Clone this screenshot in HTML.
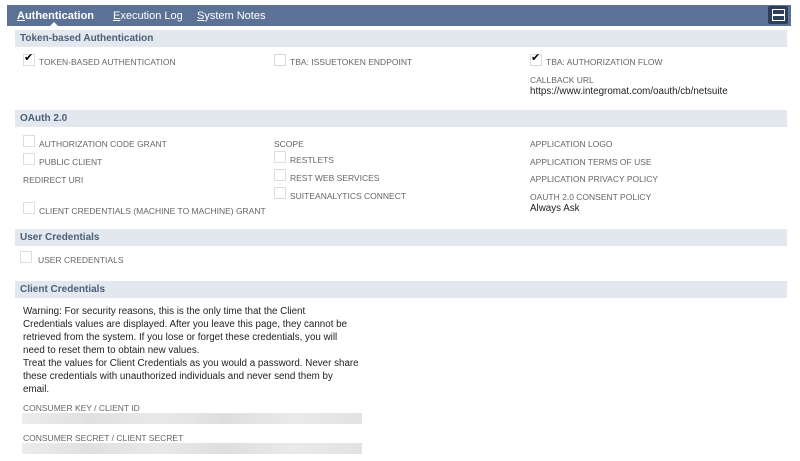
<!DOCTYPE html><html><head><style>
body{margin:0;width:800px;height:461px;background:#fff;font-family:"Liberation Sans",sans-serif;position:relative;overflow:hidden}
.a{position:absolute;white-space:nowrap}
.tabs{position:absolute;left:7px;top:5px;width:784px;height:21px;background:#5b7296}
.tab{position:absolute;top:10px;color:#fff;font-size:11px}
.hd{position:absolute;left:15px;width:772px;height:17px;background:#e3e8ef;color:#4c5e79;font-weight:bold;font-size:10px;line-height:17px;padding-left:5px;box-sizing:border-box}
.l{position:absolute;font-size:8.5px;color:#666;white-space:nowrap}
.cb{position:absolute;width:10px;height:10px;border:1px solid #ddd;background:#fff}
.t{position:absolute;font-size:9.8px;color:#222;white-space:nowrap}
.blur{position:absolute;left:22px;width:340px;height:11px;background:linear-gradient(90deg,#ececec,#e0e0e0 20%,#e9e9e9 40%,#dedede 60%,#eaeaea 80%,#e2e2e2)}
</style></head><body>
<div class="tabs"></div>
<div class="tab" style="left:17px;font-weight:bold"><u>A</u>uthentication</div>
<div class="tab" style="left:113px"><u>E</u>xecution Log</div>
<div class="tab" style="left:197px"><u>S</u>ystem Notes</div>
<div class="a" style="left:49px;top:22px;width:0;height:0;border-left:5px solid transparent;border-right:5px solid transparent;border-bottom:5px solid #fff"></div>
<div class="a" style="left:768px;top:6px;width:20px;height:18px;background:#2d3e5a;border-radius:2px"></div>
<div class="a" style="left:772px;top:9px;width:11px;height:4px;border:1px solid #fff"></div>
<div class="a" style="left:772px;top:15px;width:11px;height:4px;border:1px solid #fff"></div>

<div class="hd" style="top:30px">Token-based Authentication</div>
<div class="cb" style="left:23px;top:54px"></div><div class="a" style="left:24px;top:51px;font-size:11px">✔</div>
<div class="l" style="left:39px;top:57px">TOKEN-BASED AUTHENTICATION</div>
<div class="cb" style="left:274px;top:54px"></div>
<div class="l" style="left:290px;top:57px">TBA: ISSUETOKEN ENDPOINT</div>
<div class="cb" style="left:530px;top:54px"></div><div class="a" style="left:531px;top:51px;font-size:11px">✔</div>
<div class="l" style="left:546px;top:57px">TBA: AUTHORIZATION FLOW</div>
<div class="l" style="left:530px;top:75px">CALLBACK URL</div>
<div class="t" style="left:530px;top:86px">https://www.integromat.com/oauth/cb/netsuite</div>

<div class="hd" style="top:110px">OAuth 2.0</div>
<div class="cb" style="left:23px;top:135px"></div><div class="l" style="left:39px;top:139px">AUTHORIZATION CODE GRANT</div>
<div class="cb" style="left:23px;top:153px"></div><div class="l" style="left:39px;top:157px">PUBLIC CLIENT</div>
<div class="l" style="left:23px;top:175px">REDIRECT URI</div>
<div class="cb" style="left:23px;top:202px"></div><div class="l" style="left:39px;top:206px">CLIENT CREDENTIALS (MACHINE TO MACHINE) GRANT</div>
<div class="l" style="left:274px;top:139px">SCOPE</div>
<div class="cb" style="left:274px;top:151px"></div><div class="l" style="left:290px;top:155px">RESTLETS</div>
<div class="cb" style="left:274px;top:169px"></div><div class="l" style="left:290px;top:173px">REST WEB SERVICES</div>
<div class="cb" style="left:274px;top:187px"></div><div class="l" style="left:290px;top:191px">SUITEANALYTICS CONNECT</div>
<div class="l" style="left:530px;top:139px">APPLICATION LOGO</div>
<div class="l" style="left:530px;top:157px">APPLICATION TERMS OF USE</div>
<div class="l" style="left:530px;top:174px">APPLICATION PRIVACY POLICY</div>
<div class="l" style="left:530px;top:192px">OAUTH 2.0 CONSENT POLICY</div>
<div class="t" style="left:530px;top:203px">Always Ask</div>

<div class="hd" style="top:229px">User Credentials</div>
<div class="cb" style="left:20px;top:251px"></div><div class="l" style="left:38px;top:255px">USER CREDENTIALS</div>

<div class="hd" style="top:281px">Client Credentials</div>
<div class="t" style="left:23px;top:305px;line-height:13px">Warning: For security reasons, this is the only time that the Client<br>Credentials values are displayed. After you leave this page, they cannot be<br>retrieved from the system. If you lose or forget these credentials, you will<br>need to reset them to obtain new values.<br>Treat the values for Client Credentials as you would a password. Never share<br>these credentials with unauthorized individuals and never send them by<br>email.</div>
<div class="l" style="left:23px;top:403px">CONSUMER KEY / CLIENT ID</div>
<div class="blur" style="top:413px"></div>
<div class="l" style="left:23px;top:433px">CONSUMER SECRET / CLIENT SECRET</div>
<div class="blur" style="top:443px"></div>
</body></html>
